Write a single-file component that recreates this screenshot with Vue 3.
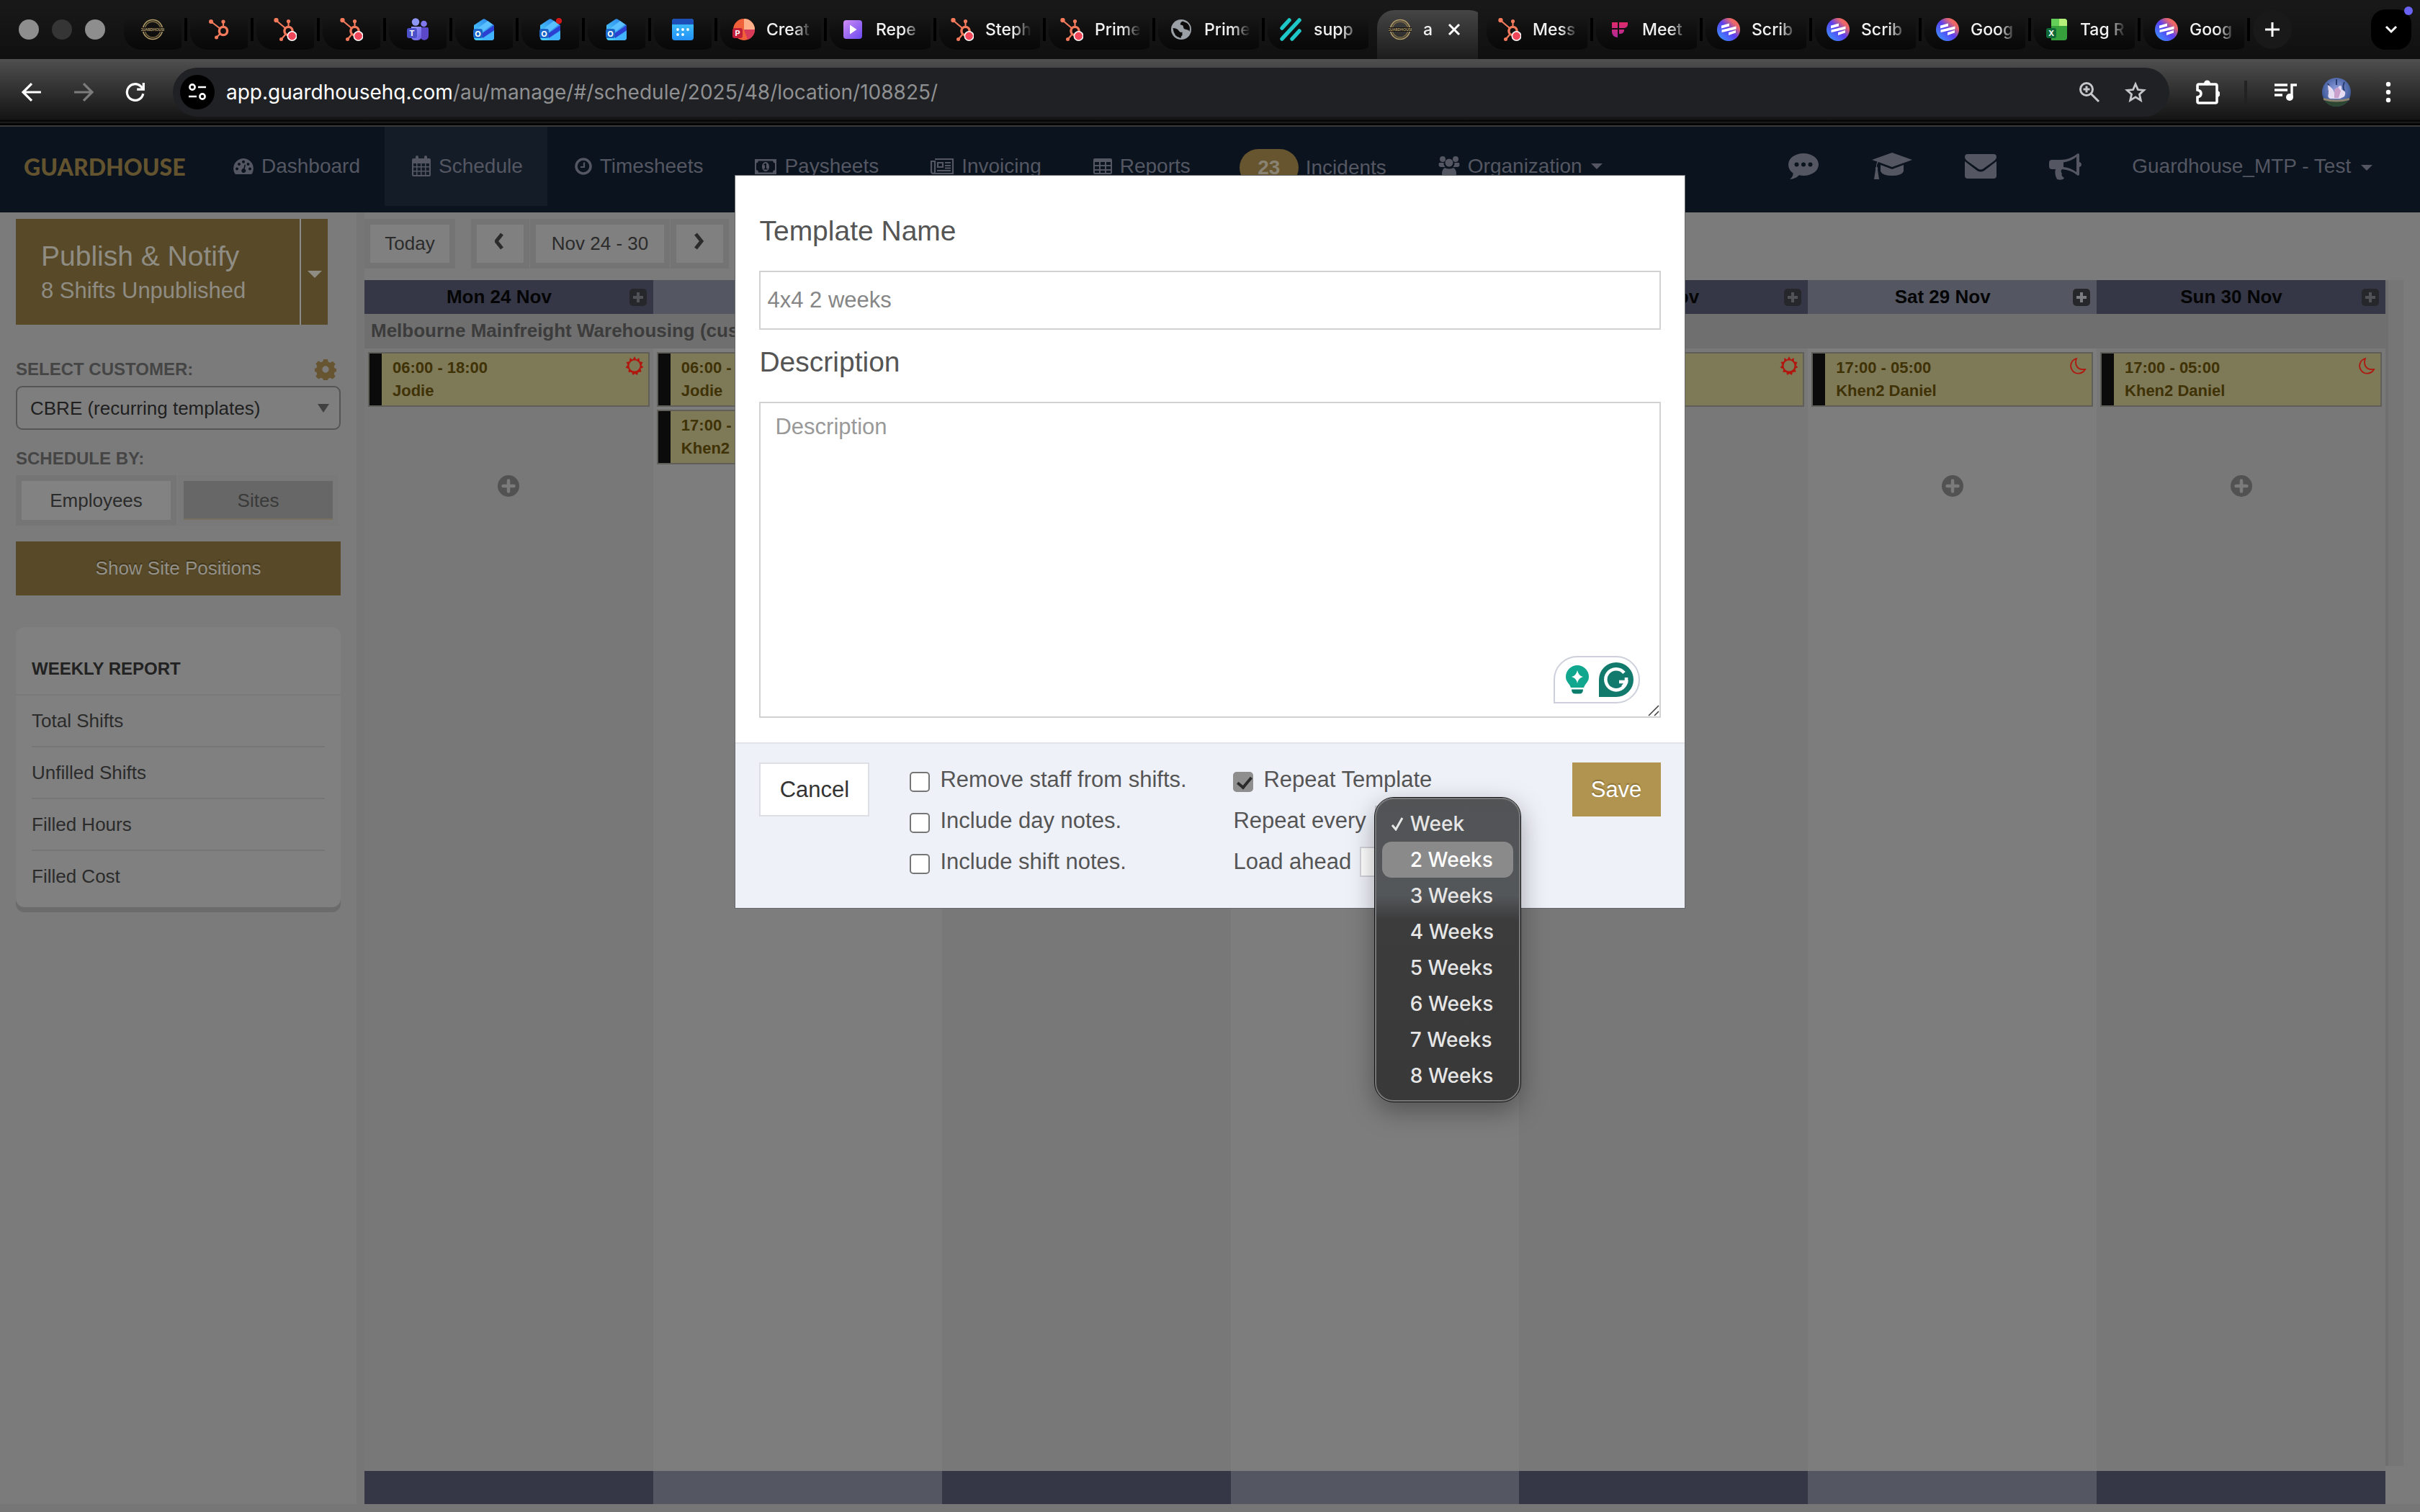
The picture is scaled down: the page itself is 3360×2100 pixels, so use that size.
<template>
    <div class="screen">
        <svg class="sprite" width="0" height="0" aria-hidden="true">
            <defs>
                <linearGradient id="g-scribe" x1="1" y1="0" x2="0" y2="1">
                    <stop offset="0" stop-color="#ff6a3d" />
                    <stop offset=".25" stop-color="#e8676e" />
                    <stop offset=".5" stop-color="#5a3ff0" />
                    <stop offset="1" stop-color="#35a4ff" />
                </linearGradient>
                <linearGradient id="g-outlook" x1="0" y1="1" x2="1" y2="0">
                    <stop offset="0" stop-color="#4fd8ff" />
                    <stop offset="1" stop-color="#2a7be8" />
                </linearGradient>
                <linearGradient id="g-teams" x1="0" y1="0" x2="1" y2="1">
                    <stop offset="0" stop-color="#9aa2ff" />
                    <stop offset="1" stop-color="#6a5ae0" />
                </linearGradient>
                <linearGradient id="g-play" x1="0" y1="0" x2="1" y2="1">
                    <stop offset="0" stop-color="#d08cf5" />
                    <stop offset="1" stop-color="#6a4af0" />
                </linearGradient>
                <linearGradient id="g-cal" x1="0" y1="0" x2="0" y2="1">
                    <stop offset="0" stop-color="#45c8ff" />
                    <stop offset="1" stop-color="#2390f5" />
                </linearGradient>
                <linearGradient id="g-fire" x1="0" y1="0" x2="0" y2="1">
                    <stop offset="0" stop-color="#e02a6a" />
                    <stop offset="1" stop-color="#b02a9a" />
                </linearGradient>
                <radialGradient id="g-avatar" cx=".5" cy=".4" r=".6">
                    <stop offset="0" stop-color="#8f9fe0" />
                    <stop offset="1" stop-color="#33508f" />
                </radialGradient>
            </defs>

            <symbol id="ring" viewBox="0 0 32 32">
                <circle cx="16" cy="16" r="13.5" fill="none" stroke="#b59f6c" stroke-width="1.6" />
                <circle cx="16" cy="16" r="11" fill="none" stroke="#7d6c45" stroke-width="1.4" />
                <rect x="0" y="13" width="32" height="6" fill="#171512" />
                <text x="16" y="18" text-anchor="middle" font-family="Lato, sans-serif" font-weight="900" font-size="5" fill="#b59f6c">GUARDHOUSE</text>
            </symbol>
            <symbol id="hub" viewBox="0 0 32 32">
                <g stroke="#f47a5c" fill="none" stroke-width="2.2">
                    <path d="M5 5l13 10M22 5v8M12.500 27l6-6" />
                    <circle cx="22" cy="18" r="5.600" stroke-width="3.400" />
                </g>
                <g fill="#f47a5c">
                    <circle cx="5" cy="5" r="3" />
                    <circle cx="22" cy="5" r="2.600" />
                    <circle cx="12.500" cy="27" r="2.500" />
                </g>
            </symbol>
            <symbol id="hubdot" viewBox="0 0 32 32">
                <g stroke="#f47a5c" fill="none" stroke-width="2.2">
                    <path d="M3 3l13 11M20.500 4v8M11 29l6-7" />
                    <circle cx="20.500" cy="18" r="5.600" stroke-width="3.400" />
                </g>
                <g fill="#f47a5c">
                    <circle cx="3.500" cy="3" r="3.200" />
                    <circle cx="20.500" cy="4.500" r="2.600" />
                    <circle cx="10.500" cy="29.500" r="2.500" />
                </g>
                <circle cx="25.500" cy="25" r="6.200" fill="#f0485a" stroke="#fff" stroke-width="1.600" />
            </symbol>
            <symbol id="teams" viewBox="0 0 32 32">
                <circle cx="13" cy="5.500" r="5.200" fill="#8f97f5" />
                <circle cx="24.500" cy="8" r="4.300" fill="#8078ee" />
                <path d="M20 13h9a2 2 0 0 1 2 2v10a6 6 0 0 1-11 3z" fill="#5b48c8" />
                <path d="M7 12h14v14a5 5 0 0 1-5 5H12a5 5 0 0 1-5-5z" fill="url(#g-teams)" />
                <rect x="1" y="14" width="14" height="14" rx="3" fill="#4b50c8" />
                <text x="8" y="25" text-anchor="middle" font-family="Inter, sans-serif" font-weight="700" font-size="11" fill="#fff">T</text>
            </symbol>
            <symbol id="outlook" viewBox="0 0 32 32">
                <path d="M2 10L14 2q2-1.300 4 0l12 8v17a4 4 0 0 1-4 4H6a4 4 0 0 1-4-4z" fill="url(#g-outlook)" />
                <path d="M8 14L21 4l7 5-17 12z" fill="#5ac0ff" />
                <path d="M12 22L30 10v7L14 28z" fill="#2b3fd0" />
                <path d="M12 31l18-13v9a4 4 0 0 1-4 4z" fill="#42b4ff" />
                <rect x="1" y="15" width="13" height="13" rx="3" fill="#1b64c8" />
                <text x="7.500" y="25.500" text-anchor="middle" font-family="Inter, sans-serif" font-weight="700" font-size="11" fill="#fff">O</text>
            </symbol>
            <symbol id="outlookdot" viewBox="0 0 32 32">
                <use href="#outlook" width="32" height="32" />
                <circle cx="28" cy="4" r="4.200" fill="#d01818" />
            </symbol>
            <symbol id="calendar" viewBox="0 0 32 32">
                <rect x="1" y="1" width="30" height="30" rx="4" fill="url(#g-cal)" />
                <path d="M1 9V5a4 4 0 0 1 4-4h22a4 4 0 0 1 4 4v4z" fill="#1d4fb8" />
                <g fill="#fff">
                    <circle cx="9" cy="16" r="1.900" /><circle cx="16" cy="16" r="1.900" /><circle cx="23" cy="16" r="1.900" />
                    <circle cx="9" cy="23" r="1.900" /><circle cx="16" cy="23" r="1.900" />
                </g>
            </symbol>
            <symbol id="ppt" viewBox="0 0 32 32">
                <circle cx="17" cy="16" r="15" fill="#f0603a" />
                <path d="M17 1a15 15 0 0 1 15 15H17z" fill="#ffb08a" />
                <path d="M17 16h15a15 15 0 0 1-10 14z" fill="#d83a5a" />
                <rect x="1" y="14" width="14" height="14" rx="3" fill="#c01f3a" />
                <text x="8" y="25" text-anchor="middle" font-family="Inter, sans-serif" font-weight="700" font-size="11" fill="#fff">P</text>
            </symbol>
            <symbol id="play" viewBox="0 0 32 32">
                <rect x="3" y="3" width="26" height="26" rx="4" fill="url(#g-play)" />
                <path d="M12 9.500l9.500 6.500-9.500 6.500z" fill="#fff" />
            </symbol>
            <symbol id="globe" viewBox="0 0 32 32">
                <circle cx="16" cy="16" r="14" fill="#9aa0a6" />
                <path d="M4.500 14q6 0 8 3.500t5 2v4.500q-2 1-2 4-10-2-11-14zM18 4.500q-4 2-3 5 4 0 4 3t4 3.500 4.500 3q2-8-3.500-12z" fill="#0c0c0c" />
            </symbol>
            <symbol id="slashes" viewBox="0 0 32 32">
                <path d="M4 14L14 3M4 29L28 3M18 29l10-11" fill="none" stroke="#1fc8c8" stroke-width="5.500" stroke-linecap="round" />
            </symbol>
            <symbol id="fire" viewBox="0 0 32 32">
                <path d="M6 6h8v8H6zM16 6h12v3a5 5 0 0 1-5 5h-7zM6 16h8v11q-8-1-8-8zM16 16h7v1a5 5 0 0 1-5 5h-2z" fill="url(#g-fire)" />
            </symbol>
            <symbol id="scribe" viewBox="0 0 32 32">
                <circle cx="16" cy="16" r="16" fill="url(#g-scribe)" />
                <path d="M6 10.500l11-3v4l-11 3zM6.500 16.500l20-5v4l-20 4.500zM16 20l10-3v3.500L16 24z" fill="#fff" />
            </symbol>
            <symbol id="excel" viewBox="0 0 32 32">
                <path d="M8 1h18a4 4 0 0 1 4 4v22a4 4 0 0 1-4 4H8z" fill="#35a03c" />
                <path d="M19 1h7a4 4 0 0 1 4 4v6H19z" fill="#b6f07a" />
                <path d="M8 1h11v10H8z" fill="#63cf58" />
                <rect x="1" y="14" width="14" height="14" rx="3" fill="#0f6a38" />
                <text x="8" y="25" text-anchor="middle" font-family="Inter, sans-serif" font-weight="700" font-size="11" fill="#fff">X</text>
            </symbol>

            <symbol id="dashboard" viewBox="0 0 30 26">
                <path fill-rule="evenodd" d="M15 2a14 14 0 0 0-12 21q.5 1 1.500 1h21q1 0 1.500-1A14 14 0 0 0 15 2zM6 14.500a2 2 0 1 1 0 4 2 2 0 0 1 0-4zM9 8a2 2 0 1 1 0 4 2 2 0 0 1 0-4zM15 4.800a2 2 0 1 1 0 4 2 2 0 0 1 0-4zM21.500 8a2 2 0 1 1 0 4 2 2 0 0 1 0-4zM24 14.500a2 2 0 1 1 0 4 2 2 0 0 1 0-4zM16.600 10.500l1.500.4-1.300 5.600a3 3 0 1 1-1.600-.4z" />
            </symbol>
            <symbol id="schedule" viewBox="0 0 28 30">
                <path fill-rule="evenodd" d="M3 4h3V2q0-2 2-2t2 2v2h8V2q0-2 2-2t2 2v2h3q2 0 2 2v21q0 2-2 2H3q-2 0-2-2V6q0-2 2-2zm0 7v4h4v-4zm5.500 0v4h4.500v-4zm6 0v4h4.500v-4zm6 0v4H25v-4zM3 16.500V21h4v-4.500zm5.500 0V21h4.500v-4.500zm6 0V21h4.500v-4.500zm6 0V21H25v-4.500zM3 22.500V27h4v-4.500zm5.500 0V27h4.500v-4.500zm6 0V27h4.500v-4.500zm6 0V27H25v-4.500z" />
            </symbol>
            <symbol id="clock" viewBox="0 0 26 26">
                <circle cx="13" cy="13" r="10" fill="none" stroke="currentColor" stroke-width="3.500" />
                <path d="M14 7.500V14H9" fill="none" stroke="currentColor" stroke-width="2.200" />
            </symbol>
            <symbol id="money" viewBox="0 0 32 26">
                <path fill-rule="evenodd" d="M1 3h30v21H1zm5 2.500a3.500 3.500 0 0 1-3 3v9.500a3.500 3.500 0 0 1 3 3.500h20a3.500 3.500 0 0 1 3-3.500V8.500a3.500 3.500 0 0 1-3-3zM16 7c3 0 5 3 5 6.500S19 20 16 20s-5-3-5-6.500S13 7 16 7zm-2.500 3v1.500H15v4.500h-1.500v1.500h5V16H17v-7h-1.500z" />
            </symbol>
            <symbol id="news" viewBox="0 0 34 26">
                <path fill="none" stroke="currentColor" stroke-width="2.200" d="M7 3h25v20H5q-3 0-3-3V6h5v14q0 3-2 3" />
                <path fill="none" stroke="currentColor" stroke-width="2.200" d="M11 8h7v6h-7zM21 8h8M21 12h8M21 15.500h8M10 19h19" />
            </symbol>
            <symbol id="grid" viewBox="0 0 28 26">
                <path fill-rule="evenodd" d="M3 2h22q2 0 2 2v18q0 2-2 2H3q-2 0-2-2V4q0-2 2-2zm0 5v4h6V7zm8 0v4h6V7zm8 0v4h6V7zM3 13v4h6v-4zm8 0v4h6v-4zm8 0v4h6v-4zM3 19v3h6v-3zm8 0v3h6v-3zm8 0v3h6v-3z" />
            </symbol>
            <symbol id="people" viewBox="0 0 32 32">
                <circle cx="7" cy="6" r="4" /><circle cx="25" cy="6" r="4" /><circle cx="16" cy="11" r="5.500" />
                <path d="M2 11h6.500a7 7 0 0 0 2 6H5q-3.500 0-3.500-3zM30 11h-6.500a7 7 0 0 1-2 6H27q3.500 0 3.500-3zM10 18q6 3 12 0 4 2 4 9 0 4-4 4H10q-4 0-4-4 0-7 4-9z" />
            </symbol>
            <symbol id="chat" viewBox="0 0 44 38">
                <path fill-rule="evenodd" d="M22 1c12 0 21 7 21 15.500S34 32 22 32q-3 0-6-.7Q11 36.500 3 37q5-4 4.500-8.500Q1 24 1 16.500C1 8 10 1 22 1zM12.500 13.500a3 3 0 1 0 0 6 3 3 0 0 0 0-6zm9.500 0a3 3 0 1 0 0 6 3 3 0 0 0 0-6zm9.500 0a3 3 0 1 0 0 6 3 3 0 0 0 0-6z" />
            </symbol>
            <symbol id="grad" viewBox="0 0 58 40">
                <path d="M29 1l28 10-28 10L10 14q-2 2-2 6.500 2 1.500 1 4L11 38H4l2-13.500q-1-2.500 1-4 0-4.500 1.500-7L1 11z" />
                <path d="M13 18l16 6 16-6v9q-3 6-16 6t-16-6z" />
            </symbol>
            <symbol id="mail" viewBox="0 0 44 34">
                <path d="M4 0h36q4 0 4 4 0 3-4 6L26 20q-4 3-8 0L4 10Q0 7 0 4q0-4 4-4z" />
                <path d="M0 10l17 13q5 3 10 0L44 10v20q0 4-4 4H4q-4 0-4-4z" />
            </symbol>
            <symbol id="horn" viewBox="0 0 44 38">
                <path fill-rule="evenodd" d="M40 1q2 0 2 2v10q3 1 3 3.500T42 20v10q0 2-2 2-9-8-22-9-3 3 0 6-2 3 3 6-2 4-10 2-4-7-2-14H4q-4 0-4-4v-5q0-4 4-4h12Q29 10 40 1zM38 6Q30 12 20 13.500v6.500q10 1 18 7z" />
            </symbol>
            <symbol id="gear" viewBox="0 0 32 32">
                <path fill-rule="evenodd" d="M13 1h6l1 4 3 1 3.500-2 4 4-2 3.500 1 3 4 .5v4l-4 1-1 3 2 3.500-4 4-3.500-2-3 1-1 3h-6l-1-3-3-1-3.500 2-4-4 2-3.500-1-3-3-.5v-5l3-.5 1-3-2-3.500 4-4 3.500 2 3-1zm3 10a5 5 0 1 0 0 10 5 5 0 0 0 0-10z" />
            </symbol>
            <symbol id="sun" viewBox="0 0 26 26">
                <path d="M13 0l2.500 4.500L19.500 2l.5 5 4.500 1-2 4.500 3 2.500-4 2 1 4.500-4.500.5-1 4-3.500-2L10.500 26 9 22l-4.500 0 .5-4.500L.5 15.500 3.500 12 1.500 8 6 7l.5-5 4 2.500z" />
                <circle cx="13" cy="13" r="7.500" fill="#7e7957" />
            </symbol>
            <symbol id="moon" viewBox="0 0 26 26">
                <path d="M11 3A10.500 10.500 0 1 0 23 18Q14 19 11 13 9 8 11 3z" fill="none" stroke="currentColor" stroke-width="1.800" />
            </symbol>
            <symbol id="plus-circle" viewBox="0 0 30 30">
                <circle cx="15" cy="15" r="15" />
                <path d="M15 7.500v15M7.500 15h15" stroke="#7b7b7b" stroke-width="4.500" stroke-linecap="round" />
            </symbol>
        </svg>

        <!-- browser chrome -->
        <div class="tabs">
            <div class="lights"><i></i><i class="off"></i><i></i></div>
            <button
                v-for="(tab, i) in tabs"
                :key="i"
                type="button"
                class="tab"
                :class="{ wide: tab.label, active: tab.active, 'no-line': tabs[i + 1] && tabs[i + 1].active }"
            >
                <svg class="favicon"><use :href="'#' + tab.icon" /></svg>
                <span v-if="tab.label" class="tab-label">{{ tab.label }}</span>
                <svg v-if="tab.active" class="tab-close" viewBox="0 0 18 18"><path d="M2 2l14 14M16 2L2 16" /></svg>
            </button>
            <button type="button" class="new-tab" aria-label="New tab">
                <svg viewBox="0 0 20 20" width="20" height="20"><path d="M10 0v20M0 10h20" /></svg>
            </button>
            <button type="button" class="tab-search" aria-label="Search tabs">
                <svg viewBox="0 0 18 12" width="18" height="12"><path d="M2 2l7 7 7-7" /></svg>
                <i></i>
            </button>
        </div>
        <div class="toolbar">
            <div class="history">
                <button type="button" class="nav-btn" aria-label="Back">
                    <svg viewBox="0 0 26 26"><path d="M25 13H3M13 2L2 13l11 11" /></svg>
                </button>
                <button type="button" class="nav-btn dim" aria-label="Forward">
                    <svg viewBox="0 0 26 26"><path d="M1 13h22M13 2l11 11-11 11" /></svg>
                </button>
                <button type="button" class="nav-btn" aria-label="Reload">
                    <svg viewBox="0 0 26 26"><path d="M23 15a10.500 10.500 0 1 1-3-9.500l3.500 3.500M23.500 1v8.500H15" /></svg>
                </button>
            </div>
            <div class="address">
                <span class="site-info">
                    <svg viewBox="0 0 26 24" width="26" height="24">
                        <circle cx="6" cy="5" r="3.600" /><path d="M14 5h11M1 18h11" /><circle cx="20" cy="18" r="3.600" />
                    </svg>
                </span>
                <span class="url">app.guardhousehq.com<em>/au/manage/#/schedule/2025/48/location/108825/</em></span>
                <svg class="addr-icon" viewBox="0 0 30 30"><circle cx="11" cy="11" r="8.500" /><path d="M17 17l11 11M11 6.500v9M6.500 11h9" /></svg>
                <svg class="addr-icon star" viewBox="0 0 32 32"><path d="M16 4l3.600 8.300 9 .8-6.800 6 2 8.900-7.800-4.700L8.200 28l2-8.900-6.800-6 9-.8z" /></svg>
            </div>
            <svg class="ext" viewBox="0 0 34 34"><path d="M5 6h23q2 0 2 2v22q0 2-2 2H5q-2 0-2-2v-6q5-1 5-5t-5-5V8q0-2 2-2z" /><path class="solid" d="M12 5a4.500 4.500 0 0 1 9 0zM30 15a4.500 4.500 0 0 1 0 9z" /></svg>
            <i class="bar-line"></i>
            <svg class="music" viewBox="0 0 32 26"><path d="M0 3h18M0 10h18M0 17h11M31 3h-7v17" /><circle cx="21" cy="20" r="5" /></svg>
            <svg class="avatar" viewBox="0 0 40 40">
                <circle cx="20" cy="20" r="20" fill="url(#g-avatar)" />
                <path d="M8 8q3 4 1 12M31 6q-3 6 0 12M20 2v8" stroke="#2a3c70" stroke-width="2" fill="none" />
                <path d="M8 10q8 4 10 14l5-12q5-3 4 4l3 2q4 2 1 8l-6 3H11q-4-2-2-7z" fill="#e6dcf2" />
                <path d="M17 16l5-3 4 5-3 10h-6z" fill="#c9a0cc" />
                <path d="M3 30q16 5 34-1-4 11-17 11T3 30z" fill="#2c4632" />
                <path d="M2 28q18 5 36 0v3q-18 5-36 0z" fill="#8c8270" />
            </svg>
            <svg class="dots" viewBox="0 0 8 30"><circle cx="4" cy="4" r="3.200" /><circle cx="4" cy="15" r="3.200" /><circle cx="4" cy="26" r="3.200" /></svg>
        </div>

        <!-- app header -->
        <header class="header">
            <a href="#" class="logo">GUARDHOUSE</a>
            <nav class="menu">
                <a
                    v-for="item in nav"
                    :key="item.label"
                    href="#"
                    class="menu-item"
                    :class="{ current: item.current, counted: item.badge }"
                >
                    <span v-if="item.badge" class="badge">{{ item.badge }}</span>
                    <svg v-else :width="item.w" :height="item.h"><use :href="'#' + item.icon" /></svg>
                    <span>{{ item.label }}</span>
                    <i v-if="item.caret" class="caret"></i>
                </a>
            </nav>
            <div class="tools">
                <a href="#" aria-label="Chat"><svg width="44" height="38"><use href="#chat" /></svg></a>
                <a href="#" aria-label="Training"><svg width="58" height="40"><use href="#grad" /></svg></a>
                <a href="#" aria-label="Mail"><svg width="44" height="34"><use href="#mail" /></svg></a>
                <a href="#" aria-label="News"><svg width="46" height="38"><use href="#horn" /></svg></a>
                <a href="#" class="user">Guardhouse_MTP - Test <i class="caret"></i></a>
            </div>
        </header>

        <div class="content">
            <aside class="sidebar">
                <div class="publish">
                    <button type="button" class="publish-main">
                        <span class="big">Publish &amp; Notify</span>
                        <span class="small">8 Shifts Unpublished</span>
                    </button>
                    <button type="button" class="publish-more" aria-label="More"><i class="caret"></i></button>
                </div>

                <div class="side-label">
                    <label for="customer">SELECT CUSTOMER:</label>
                    <svg width="30" height="30"><use href="#gear" /></svg>
                </div>
                <div class="customer">
                    <select id="customer" v-model="customer">
                        <option>CBRE (recurring templates)</option>
                    </select>
                    <i class="caret"></i>
                </div>

                <div class="side-label by">SCHEDULE BY:</div>
                <div class="segment">
                    <button type="button">Employees</button>
                    <button type="button" class="on">Sites</button>
                </div>
                <button type="button" class="positions">Show Site Positions</button>

                <section class="report">
                    <h3>WEEKLY REPORT</h3>
                    <ul>
                        <li v-for="row in report" :key="row">{{ row }}</li>
                    </ul>
                </section>
            </aside>

            <main class="main">
                <div class="dates">
                    <button type="button" class="today">Today</button>
                    <button type="button" class="arrow" aria-label="Previous week">
                        <svg viewBox="0 0 16 24"><path d="M10 2L2 12l8 10" /></svg>
                    </button>
                    <button type="button" class="range">Nov 24 - 30</button>
                    <button type="button" class="arrow" aria-label="Next week">
                        <svg viewBox="0 0 16 24"><path d="M2 2l8 10-8 10" /></svg>
                    </button>
                </div>
                <div class="board">
                    <table class="schedule">
                        <thead>
                            <tr>
                                <th v-for="day in days" :key="day.name">
                                    <div class="day-head">
                                        <span>{{ day.name }}</span>
                                        <button type="button" aria-label="Add">
                                            <svg viewBox="0 0 24 24"><path d="M12 5v14M5 12h14" /></svg>
                                        </button>
                                    </div>
                                </th>
                            </tr>
                        </thead>
                        <tbody>
                            <tr class="site">
                                <td colspan="7">Melbourne Mainfreight Warehousing (customer)</td>
                            </tr>
                            <tr>
                                <td v-for="day in days" :key="day.name" class="day">
                                    <div class="shifts">
                                        <div v-for="shift in day.shifts" :key="shift.time" class="shift">
                                            <div>{{ shift.time }}<br />{{ shift.name }}</div>
                                            <svg width="26" height="26"><use :href="'#' + shift.icon" /></svg>
                                        </div>
                                    </div>
                                    <button type="button" class="add" aria-label="Add shift">
                                        <svg width="30" height="30"><use href="#plus-circle" /></svg>
                                    </button>
                                </td>
                            </tr>
                        </tbody>
                        <tfoot>
                            <tr><td v-for="day in days" :key="day.name"></td></tr>
                        </tfoot>
                    </table>
                    <div class="scroll"></div>
                </div>
            </main>
        </div>

        <!-- save template dialog -->
        <div class="overlay">
            <form class="modal" role="dialog" @submit.prevent>
                <div class="modal-body">
                    <label for="name">Template Name</label>
                    <input id="name" v-model="form.name" type="text" />
                    <label for="description">Description</label>
                    <div class="area">
                        <textarea id="description" v-model="form.description" placeholder="Description"></textarea>
                        <div class="assistant">
                            <svg viewBox="0 0 34 42" width="34" height="42">
                                <path d="M17 1a16 16 0 0 1 16 16c0 7-5 9-7 15H8C6 26 1 24 1 17A16 16 0 0 1 17 1z" fill="#11a68e" />
                                <path d="M17 8q1.500 7.500 8 9-6.500 1.500-8 9-1.500-7.500-8-9 6.500-1.500 8-9z" fill="#fff" />
                                <path d="M9 34.500h16q0 6-5 6h-6q-5 0-5-6z" fill="#0a7c6c" />
                            </svg>
                            <svg viewBox="0 0 48 48" width="48" height="48">
                                <path d="M24 0a24 24 0 1 1 0 48H0V24A24 24 0 0 1 24 0z" fill="#127a6c" />
                                <path d="M35 14.500A14.500 14.500 0 1 0 38 27h-10M38 21v7l-5 6" fill="none" stroke="#fff" stroke-width="4.600" />
                            </svg>
                        </div>
                        <svg class="grip" viewBox="0 0 16 16" width="16" height="16"><path d="M1 15L15 1M9 15l6-6" /></svg>
                    </div>
                </div>
                <div class="modal-foot">
                    <button type="button" class="cancel">Cancel</button>
                    <div class="options notes">
                        <div class="option">
                            <input id="staff" v-model="form.staff" type="checkbox" />
                            <label for="staff">Remove staff from shifts.</label>
                        </div>
                        <div class="option">
                            <input id="day" v-model="form.day" type="checkbox" />
                            <label for="day">Include day notes.</label>
                        </div>
                        <div class="option">
                            <input id="shift" v-model="form.shift" type="checkbox" />
                            <label for="shift">Include shift notes.</label>
                        </div>
                    </div>
                    <div class="options">
                        <div class="option">
                            <input id="repeat" v-model="form.repeat" type="checkbox" />
                            <label for="repeat">Repeat Template</label>
                        </div>
                        <div class="option field">
                            <label for="every">Repeat every</label>
                            <div class="every">
                                <select id="every" v-model="form.every">
                                    <option v-for="week in weeks" :key="week">{{ week }}</option>
                                </select>
                                <ul class="popup">
                                    <li v-for="week in weeks" :key="week" :class="{ hover: week === hovered }">
                                        <svg v-if="week === form.every" viewBox="0 0 18 20"><path d="M2 12l5 6L16 2" /></svg>
                                        {{ week }}
                                    </li>
                                </ul>
                            </div>
                        </div>
                        <div class="option field">
                            <label for="ahead">Load ahead</label>
                            <input id="ahead" v-model="form.ahead" class="ahead" type="text" />
                        </div>
                    </div>
                    <button type="submit" class="save">Save</button>
                </div>
            </form>
        </div>
    </div>
</template>

<script setup>
import { ref } from 'vue';

const tabs = [
    { icon: 'ring' },
    { icon: 'hub' },
    { icon: 'hubdot' },
    { icon: 'hubdot' },
    { icon: 'teams' },
    { icon: 'outlook' },
    { icon: 'outlookdot' },
    { icon: 'outlook' },
    { icon: 'calendar' },
    { icon: 'ppt', label: 'Creat' },
    { icon: 'play', label: 'Repe' },
    { icon: 'hubdot', label: 'Steph' },
    { icon: 'hubdot', label: 'Prime' },
    { icon: 'globe', label: 'Prime' },
    { icon: 'slashes', label: 'supp' },
    { icon: 'ring', label: 'a', active: true },
    { icon: 'hubdot', label: 'Mess' },
    { icon: 'fire', label: 'Meet' },
    { icon: 'scribe', label: 'Scrib' },
    { icon: 'scribe', label: 'Scrib' },
    { icon: 'scribe', label: 'Goog' },
    { icon: 'excel', label: 'Tag R' },
    { icon: 'scribe', label: 'Goog' },
];

const nav = [
    { label: 'Dashboard', icon: 'dashboard', w: 30, h: 26 },
    { label: 'Schedule', icon: 'schedule', w: 28, h: 30, current: true },
    { label: 'Timesheets', icon: 'clock', w: 26, h: 26 },
    { label: 'Paysheets', icon: 'money', w: 32, h: 26 },
    { label: 'Invoicing', icon: 'news', w: 34, h: 26 },
    { label: 'Reports', icon: 'grid', w: 28, h: 26 },
    { label: 'Incidents', badge: 23 },
    { label: 'Organization', icon: 'people', w: 32, h: 32, caret: true },
];

const jodie = { time: '06:00 - 18:00', name: 'Jodie', icon: 'sun' };
const khen = { time: '17:00 - 05:00', name: 'Khen2 Daniel', icon: 'moon' };

const days = [
    { name: 'Mon 24 Nov', shifts: [jodie] },
    { name: 'Tue 25 Nov', shifts: [jodie, khen] },
    { name: 'Wed 26 Nov', shifts: [jodie] },
    { name: 'Thu 27 Nov', shifts: [jodie] },
    { name: 'Fri 28 Nov', shifts: [jodie] },
    { name: 'Sat 29 Nov', shifts: [khen] },
    { name: 'Sun 30 Nov', shifts: [khen] },
];

const report = ['Total Shifts', 'Unfilled Shifts', 'Filled Hours', 'Filled Cost'];
const weeks = ['Week', '2 Weeks', '3 Weeks', '4 Weeks', '5 Weeks', '6 Weeks', '7 Weeks', '8 Weeks'];

const customer = ref('CBRE (recurring templates)');
const hovered = ref('2 Weeks');
const form = ref({
    name: '4x4 2 weeks',
    description: '',
    staff: false,
    day: false,
    shift: false,
    repeat: true,
    every: 'Week',
    ahead: '',
});
</script>

<style>
body {
    margin: 0;
    background: #767676;
}
</style>

<style scoped>
* {
    box-sizing: border-box;
}

.screen {
    position: relative;
    display: flex;
    flex-direction: column;
    min-height: 100vh;
    font-family: "Liberation Sans", Arial, sans-serif;
    font-size: 26px;
    color: #2b2b2b;
}

.sprite {
    position: absolute;
}

button {
    font: inherit;
    border: 0;
    padding: 0;
    background: none;
    color: inherit;
}

svg {
    flex: none;
}

a {
    color: inherit;
    text-decoration: none;
}

.caret {
    display: inline-block;
    border: 8px solid transparent;
    border-top-color: currentColor;
    border-bottom: 0;
}

/* tab strip */
.tabs {
    display: flex;
    align-items: center;
    height: 82px;
    padding: 0 12px 0 26px;
    background: linear-gradient(#191919, #101010);
    font-family: Inter, sans-serif;
    font-size: 23px;
    color: #f1f1f1;
}

.lights {
    display: flex;
    gap: 18px;
    width: 146px;
}

.lights i {
    width: 28px;
    height: 28px;
    border-radius: 50%;
    background: #8e8e8e;
}

.lights .off {
    background: #353535;
}

.tab {
    position: relative;
    display: flex;
    align-items: center;
    width: 92px;
    height: 56px;
    padding-left: 24px;
    border-radius: 24px;
    background: linear-gradient(transparent 20%, #080808) 0 0 / 80px 56px no-repeat;
}

.tab::after {
    content: "";
    position: absolute;
    right: 4px;
    top: 12px;
    width: 4px;
    height: 32px;
    background: #000;
}

.tab.wide {
    width: 152px;
    padding-left: 16px;
    background-size: 140px 56px;
}

.tab.no-line::after,
.tab.active::after {
    display: none;
}

.tab.active {
    height: 68px;
    align-self: flex-end;
    padding-bottom: 14px;
    background: linear-gradient(#454545, #1c1c1c) 0 0 / 140px 68px no-repeat;
    border-radius: 24px 24px 0 0;
}

.favicon {
    width: 32px;
    height: 32px;
}

.tab-label {
    width: 64px;
    margin-left: 16px;
    overflow: hidden;
    white-space: nowrap;
    text-align: left;
    font-weight: 500;
    mask-image: linear-gradient(90deg, #000 60%, transparent);
}

.tab.active .tab-label {
    width: 20px;
}

.tab-close {
    width: 18px;
    height: 18px;
    margin-left: 14px;
    stroke: #fff;
    stroke-width: 3;
}

.new-tab {
    display: grid;
    place-items: center;
    width: 54px;
    height: 54px;
    border-radius: 50%;
    background: #191919;
}

.new-tab svg,
.tab-search svg {
    fill: none;
    stroke: #fff;
    stroke-width: 3;
}

.tab-search {
    position: relative;
    display: grid;
    place-items: center;
    width: 56px;
    height: 56px;
    margin-left: auto;
    border-radius: 20px;
    background: #000;
}

.tab-search i {
    position: absolute;
    top: -4px;
    right: -2px;
    width: 12px;
    height: 12px;
    border-radius: 50%;
    background: #6a62f5;
}

/* address row */
.toolbar {
    display: flex;
    align-items: center;
    height: 94px;
    padding: 0 40px 0 30px;
    border-bottom: 2px solid #3a3a3a;
    background: linear-gradient(#4f4f4f, #141414 84px, #000 86px, #222 88px, #000 90px);
}

.history {
    display: flex;
    gap: 44px;
    width: 210px;
}

.nav-btn {
    width: 28px;
    height: 28px;
    color: #fff;
}

.nav-btn.dim {
    color: #7c7c7c;
}

.nav-btn svg {
    display: block;
    width: 28px;
    height: 28px;
    fill: none;
    stroke: currentColor;
    stroke-width: 3;
}

.address {
    display: flex;
    flex: 1;
    align-items: center;
    height: 68px;
    padding: 0 32px 0 10px;
    border-radius: 34px;
    background: #202124;
}

.site-info {
    display: grid;
    place-items: center;
    width: 48px;
    height: 48px;
    border-radius: 50%;
    background: #000;
}

.site-info svg {
    fill: none;
    stroke: #fff;
    stroke-width: 2.6;
}

.url {
    flex: 1;
    margin-left: 16px;
    font: 28px Inter, sans-serif;
    color: #fff;
}

.url em {
    font-style: normal;
    color: #8f9092;
}

.addr-icon {
    width: 30px;
    height: 30px;
    margin-left: 34px;
    fill: none;
    stroke: #c4c6ca;
    stroke-width: 3;
}

.ext {
    width: 34px;
    height: 34px;
    margin: 0 34px 0 36px;
    fill: none;
    stroke: #fff;
    stroke-width: 3.6;
}

.ext .solid {
    fill: #fff;
    stroke: none;
}

.bar-line {
    width: 4px;
    height: 32px;
    background: #222;
}

.music {
    width: 32px;
    height: 26px;
    margin: 0 34px 0 38px;
    fill: #fff;
    stroke: #fff;
    stroke-width: 3.4;
}

.music path {
    fill: none;
}

.music circle {
    stroke: none;
}

.avatar {
    width: 40px;
    height: 40px;
}

.dots {
    width: 8px;
    height: 30px;
    margin-left: 48px;
    fill: #fff;
}

/* header */
.header {
    display: flex;
    height: 119px;
    padding: 0 66px 0 33px;
    background: #0b131e;
    font-size: 28px;
    color: #545762;
    fill: #545762;
}

.logo {
    width: 253px;
    line-height: 112px;
    font-family: Lato, sans-serif;
    font-weight: 900;
    font-size: 32px;
    color: #63532f;
}

.menu {
    display: flex;
    height: 110px;
}

.menu-item {
    display: flex;
    align-items: center;
    gap: 10px;
    padding: 0 34px 0 37px;
}

.menu-item.current {
    background: #141c28;
}

.menu-item.counted {
    padding-top: 4px;
    padding-left: 34px;
}

.menu-item .caret {
    margin-left: 2px;
}

.badge {
    width: 82px;
    height: 52px;
    border-radius: 26px;
    background: #66552f;
    color: #8a8272;
    text-align: center;
    font-weight: bold;
    line-height: 52px;
}

.tools {
    display: flex;
    align-items: center;
    height: 110px;
    margin-left: auto;
    gap: 72px;
}

.tools svg {
    display: block;
}

.user {
    margin-left: -2px;
}

.user .caret {
    margin-left: 6px;
    vertical-align: middle;
}

/* sidebar */
.content {
    display: flex;
    flex: 1;
    padding-bottom: 11px;
}

.sidebar {
    display: flex;
    flex-direction: column;
    width: 495px;
    padding: 9px 22px 0;
    margin-right: 11px;
    background: #7b7b7b;
}

.publish {
    display: flex;
    gap: 2px;
    width: 433px;
    height: 147px;
    color: #8f8c84;
    text-shadow: 0 -2px 1px #3c3219;
    background: #8a8a8a;
}

.publish-main {
    flex: 1;
    padding: 4px 0 0 35px;
    text-align: left;
    background: #584a28;
}

.publish-main span {
    display: block;
    line-height: 48px;
}

.big {
    font-size: 39px;
}

.small {
    font-size: 31px;
}

.publish-more {
    width: 37px;
    background: #584a28;
}

.publish-more .caret {
    border-width: 10px 10px 0;
}

.side-label {
    display: flex;
    justify-content: space-between;
    align-items: center;
    height: 30px;
    margin: 47px 6px 8px 0;
    font-size: 24px;
    font-weight: bold;
    color: #454545;
    fill: #665530;
}

.side-label.by {
    margin-top: 25px;
}

.customer {
    position: relative;
    width: 451px;
}

.customer select {
    appearance: none;
    display: block;
    width: 100%;
    height: 61px;
    padding: 0 18px;
    border: 2px solid #555;
    border-radius: 9px;
    background: #7e7e7e;
    font: inherit;
    color: #202020;
}

.customer .caret {
    position: absolute;
    right: 16px;
    top: 25px;
    border-width: 12px 8px 0;
    color: #404040;
}

.segment {
    display: flex;
    gap: 2px;
    width: 448px;
    height: 70px;
}

.segment button {
    flex: 1;
    border: 8px solid #757575;
    background: #828282;
}

.segment .on {
    border-color: #797979;
    background: #676767;
    color: #3a3a3a;
    box-shadow: inset 0 -2px #77705f;
}

.positions {
    width: 451px;
    height: 75px;
    margin: 22px 0 44px;
    background: #584a28;
    color: #94918a;
    text-shadow: 0 -2px 1px #3c3219;
}

.report {
    width: 451px;
    padding-bottom: 6px;
    border-radius: 12px;
    background: #808080;
    box-shadow: 0 7px #6b6b6b;
}

.report h3 {
    margin: 0;
    padding: 43px 22px 20px;
    border-bottom: 2px solid #7a7a7a;
    font-size: 24px;
    line-height: 30px;
    color: #222;
}

.report ul {
    margin: 0;
    padding: 0 22px;
    list-style: none;
}

.report li {
    height: 72px;
    line-height: 70px;
    border-bottom: 2px solid #767676;
}

.report li:last-child {
    border: 0;
}

/* schedule */
.main {
    display: flex;
    flex: 1;
    flex-direction: column;
    padding-top: 9px;
    background: #7b7b7b;
}

.dates {
    display: flex;
    gap: 1px;
    margin-bottom: 16px;
}

.dates button {
    height: 69px;
    border: 8px solid #747474;
    background: #808080;
}

.dates .today {
    width: 126px;
    margin-right: 21px;
}

.dates .range {
    width: 194px;
}

.arrow {
    width: 81px;
}

.arrow svg {
    width: 16px;
    height: 24px;
    fill: none;
    stroke: #2b2b2b;
    stroke-width: 5;
}

.board {
    display: grid;
    flex: 1;
    grid-template-columns: 1fr 25px;
    padding-right: 23px;
}

.scroll {
    margin-bottom: 53px;
    border-left: 4px solid #6f6f6f;
    background: #767676;
}

.schedule {
    width: 100%;
    height: 100%;
    border-collapse: collapse;
    table-layout: fixed;
}

.schedule th,
.schedule td {
    padding: 0;
}

.schedule thead th {
    height: 47px;
    background: #353747;
    color: #050505;
}

.schedule thead th:nth-child(even),
.schedule tfoot td:nth-child(even) {
    background: #545762;
}

.day-head {
    display: flex;
    align-items: center;
    padding: 0 9px 0 6px;
}

.day-head span {
    flex: 1;
}

.day-head button {
    width: 24px;
    height: 24px;
    border-radius: 5px;
    background: #26272b;
}

.day-head svg {
    display: block;
    width: 24px;
    height: 24px;
    stroke: #505258;
    stroke-width: 4;
}

th:nth-child(even) .day-head svg {
    stroke: #7a7c82;
}

.schedule .site td {
    height: 48px;
    padding: 0 0 2px 9px;
    background: #6f6f6f;
    color: #3c3c3c;
    font-weight: bold;
}

.schedule .day {
    vertical-align: top;
    text-align: center;
    background: #787878;
}

.schedule .day:nth-child(even) {
    background: #7d7d7d;
}

.shifts {
    display: flex;
    flex-direction: column;
    gap: 4px;
    height: 176px;
    padding: 5px;
    text-align: left;
}

.shift {
    display: flex;
    justify-content: space-between;
    height: 76px;
    padding: 4px 6px 0 15px;
    border: 2px solid #5f5e58;
    background: linear-gradient(#0b0b0b, #0b0b0b) 0 0 / 17px 100% no-repeat #7e7957;
    font-size: 22px;
    font-weight: bold;
    line-height: 32px;
    color: #3f3206;
}

.shift div {
    padding-left: 17px;
}

.shift svg {
    fill: #b0180f;
    color: #b0180f;
}

.add svg {
    display: block;
    fill: #525252;
}

.schedule tfoot td {
    height: 46px;
    background: #353747;
}

/* dialog */
.overlay {
    position: absolute;
    inset: 0;
    display: flex;
    justify-content: center;
    align-items: flex-start;
    padding-top: 244px;
}

.modal {
    width: 39.2%;
    background: #fff;
    color: #555;
    font-size: 31px;
    outline: 1px solid #66676b;
}

.modal-body {
    padding: 53px 33px 34px;
}

.modal-body label {
    display: block;
    margin-bottom: 31px;
    font-size: 39px;
    line-height: 48px;
}

.modal-body input,
.modal-body textarea {
    display: block;
    width: 100%;
    border: 2px solid #d2d2d2;
    font: inherit;
    color: #868686;
}

.modal-body input {
    height: 82px;
    margin-bottom: 21px;
    padding: 0 9px;
}

.modal-body textarea {
    height: 439px;
    padding: 15px 20px;
    resize: none;
}

.modal-body textarea::placeholder {
    color: #999;
}

.area {
    position: relative;
}

.assistant {
    position: absolute;
    right: 29px;
    bottom: 20px;
    display: flex;
    align-items: center;
    gap: 13px;
    height: 66px;
    padding: 0 7px 0 14px;
    border: 2px solid #cdd0dc;
    border-radius: 33px 33px 33px 0;
    background: #fff;
}

.grip {
    position: absolute;
    right: 2px;
    bottom: 2px;
    stroke: #444;
    stroke-width: 1.6;
}

.modal-foot {
    display: flex;
    align-items: flex-start;
    gap: 56px;
    padding: 21px 33px 36px;
    border-top: 2px solid #e2e4ea;
    background: #eff1f9;
}

.cancel,
.save {
    height: 75px;
    margin-top: 5px;
}

.cancel {
    width: 153px;
    border: 2px solid #dddfe4;
    background: #fff;
    color: #333;
}

.save {
    width: 123px;
    margin-left: auto;
    background: #b09450;
    color: #fff;
    text-shadow: 0 -2px 1px #8a7238;
}

.notes {
    width: 393px;
}

.option {
    display: flex;
    align-items: center;
    gap: 14px;
    height: 57px;
    white-space: nowrap;
}

.option.field {
    gap: 12px;
}

.option input[type="checkbox"] {
    appearance: none;
    position: relative;
    width: 28px;
    height: 28px;
    margin: 6px 0 0;
    border: 2px solid #767676;
    border-radius: 5px;
    background: #fff;
}

.option input[type="checkbox"]:checked {
    border-color: #8e8e8e;
    background: #8e8e8e;
}

.option input[type="checkbox"]:checked::after {
    content: "";
    position: absolute;
    left: 8px;
    top: 1px;
    width: 8px;
    height: 16px;
    border: solid #2b2b2b;
    border-width: 0 4px 4px 0;
    transform: rotate(40deg);
}

.every {
    position: relative;
}

.every select {
    display: block;
    width: 130px;
    height: 42px;
    border: 2px solid #c8cad2;
    background: #fff;
    font: inherit;
}

.ahead {
    width: 100px;
    height: 42px;
    border: 2px solid #d2d4da;
    font: inherit;
}

.popup {
    position: absolute;
    z-index: 2;
    left: 0;
    top: -11px;
    width: 202px;
    margin: 0;
    padding: 9px 8px;
    list-style: none;
    border: 2px solid #77787a;
    border-radius: 26px;
    outline: 1px solid #111;
    background: linear-gradient(#515355, #54575a 32%, #3c3c3d 40%, #393939);
    box-shadow: 0 12px 36px rgba(0, 0, 0, 0.35);
    font-family: Inter, sans-serif;
    font-size: 28px;
    font-weight: 500;
    color: #e6e6e6;
}

.popup li {
    position: relative;
    height: 50px;
    padding-left: 39px;
    border-radius: 13px;
    line-height: 50px;
}

.popup .hover {
    background: #8a8a8a;
    color: #fff;
}

.popup svg {
    position: absolute;
    left: 12px;
    top: 15px;
    width: 18px;
    height: 20px;
    fill: none;
    stroke: #e6e6e6;
    stroke-width: 3;
}
</style>
